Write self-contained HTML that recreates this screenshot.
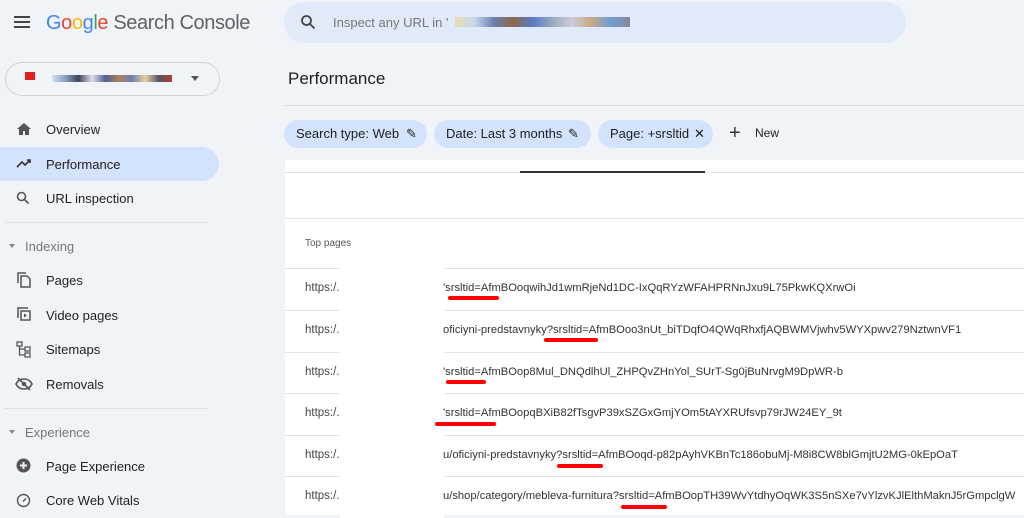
<!DOCTYPE html>
<html><head><meta charset="utf-8"><style>
*{margin:0;padding:0;box-sizing:border-box}
body{width:1024px;height:515px;overflow:hidden;background:#f0f4f9;font-family:"Liberation Sans",Arial,sans-serif;position:relative;color:#1f1f1f}
.a{position:absolute}
.nav{font-size:13px;color:#1f1f1f}
.sec{font-size:13px;color:#747775}
.chip{position:absolute;top:120px;height:28px;border-radius:14px;background:#d3e3fd;font-size:13px;color:#1f1f1f;line-height:28px;padding-left:12px}
.row{position:absolute;left:285px;width:739px;height:41px;border-top:1px solid #e3e3e3}
.row .h{position:absolute;left:20px;top:13px;font-size:11.5px;color:#444}
.row .gap{position:absolute;left:55px;top:-1px;width:104px;height:42px;background:#fff}
.row .u{position:absolute;top:13px;font-size:11.2px;color:#333;white-space:nowrap}
.red{position:absolute;height:4px;border-radius:2px;background:#f00}
</style></head><body>
<div class="a" style="left:14px;top:16px;width:16px;height:2px;background:#444;box-shadow:0 5px 0 #444,0 10px 0 #444"></div>
<div class="a" style="left:46px;top:12px;font-size:20px;letter-spacing:-0.4px"><span style="color:#4285f4">G</span><span style="color:#ea4335">o</span><span style="color:#fbbc05">o</span><span style="color:#4285f4">g</span><span style="color:#34a853">l</span><span style="color:#ea4335">e</span> <span style="color:#5f6368">Search Console</span></div>
<div class="a" style="left:284px;top:2px;width:622px;height:41px;border-radius:21px;background:#e1eaf9"></div>
<svg class="a" style="left:300px;top:14px" width="16" height="16" viewBox="0 0 16 16"><circle cx="6.5" cy="6.5" r="4.5" fill="none" stroke="#444" stroke-width="1.8"/><path d="M10 10l4.5 4.5" stroke="#444" stroke-width="1.8"/></svg>
<div class="a" style="left:333px;top:15px;font-size:13px;color:#777">Inspect any URL in '</div>
<div class="a" style="left:455px;top:17px;width:175px;height:10px;background:linear-gradient(90deg,#e8dcb0,#c9d6ee,#6a7fae,#8a6a4a,#5a7bc8,#9ab,#ccd,#c8a880,#6ea0d8,#889)"></div>
<div class="a" style="left:5px;top:62px;width:215px;height:34px;border-radius:17px;border:1px solid #d0d4d9"></div>
<div class="a" style="left:25px;top:72px;width:10px;height:8px;background:#e02020"></div>
<div class="a" style="left:52px;top:75px;width:120px;height:7px;background:linear-gradient(90deg,#cfe0f5,#8aa0c0,#445,#dde,#506090,#b08060,#7080b0,#e8d0a0,#556,#b04030)"></div>
<div class="a" style="left:191px;top:76px;border:4px solid transparent;border-top:5px solid #555"></div>
<div class="a" style="left:0;top:147px;width:219px;height:34px;border-radius:0 17px 17px 0;background:#d3e3fd"></div>
<svg class="a" style="left:16px;top:122px" width="16" height="14" viewBox="0 0 16 14"><path d="M8 1L1 7h2v6h4V9h2v4h4V7h2z" fill="#555"/></svg>
<div class="a nav" style="left:46px;top:122px">Overview</div>
<svg class="a" style="left:16px;top:157px" width="16" height="12" viewBox="0 0 16 12"><path d="M1 10l5-5 3 3 5-5M11 3h3v3" fill="none" stroke="#333" stroke-width="1.6"/></svg>
<div class="a nav" style="left:46px;top:157px">Performance</div>
<svg class="a" style="left:16px;top:191px" width="14" height="14" viewBox="0 0 14 14"><circle cx="5.5" cy="5.5" r="4" fill="none" stroke="#555" stroke-width="1.6"/><path d="M8.5 8.5l4 4" stroke="#555" stroke-width="1.6"/></svg>
<div class="a nav" style="left:46px;top:191px">URL inspection</div>
<div class="a" style="left:4px;top:222px;width:204px;height:1px;background:#dfe3e8"></div>
<div class="a" style="left:9px;top:244px;border:3px solid transparent;border-top:4px solid #888"></div>
<div class="a sec" style="left:25px;top:239px">Indexing</div>
<svg class="a" style="left:16px;top:271px" width="16" height="17" viewBox="0 0 16 17"><path d="M2 12V2h8" fill="none" stroke="#555" stroke-width="1.5"/><path d="M5 5h6l3 3v8H5z" fill="none" stroke="#555" stroke-width="1.5"/></svg>
<div class="a nav" style="left:46px;top:273px">Pages</div>
<svg class="a" style="left:16px;top:306px" width="16" height="16" viewBox="0 0 16 16"><path d="M2 12V2h10" fill="none" stroke="#555" stroke-width="1.5"/><rect x="5" y="5" width="9" height="9" fill="none" stroke="#555" stroke-width="1.5"/><path d="M8 7.5v4l3-2z" fill="#555"/></svg>
<div class="a nav" style="left:46px;top:308px">Video pages</div>
<svg class="a" style="left:16px;top:341px" width="16" height="17" viewBox="0 0 16 17"><rect x="1" y="1" width="5" height="4" fill="none" stroke="#555" stroke-width="1.3"/><rect x="9" y="6" width="5" height="4" fill="none" stroke="#555" stroke-width="1.3"/><rect x="9" y="12" width="5" height="4" fill="none" stroke="#555" stroke-width="1.3"/><path d="M3.5 5v9h5.5M3.5 8h5.5" fill="none" stroke="#555" stroke-width="1.3"/></svg>
<div class="a nav" style="left:46px;top:342px">Sitemaps</div>
<svg class="a" style="left:15px;top:377px" width="18" height="14" viewBox="0 0 18 14"><path d="M1 7c2-4 5-5 8-5s6 1 8 5c-2 4-5 5-8 5s-6-1-8-5z" fill="none" stroke="#555" stroke-width="1.6"/><circle cx="9" cy="7" r="2.2" fill="#555"/><path d="M3 1l12 12" stroke="#555" stroke-width="1.6"/></svg>
<div class="a nav" style="left:46px;top:377px">Removals</div>
<div class="a" style="left:4px;top:408px;width:204px;height:1px;background:#dfe3e8"></div>
<div class="a" style="left:9px;top:430px;border:3px solid transparent;border-top:4px solid #888"></div>
<div class="a sec" style="left:25px;top:425px">Experience</div>
<svg class="a" style="left:16px;top:458px" width="15" height="15" viewBox="0 0 15 15"><circle cx="7.5" cy="7.5" r="7" fill="#555"/><path d="M7.5 4v7M4 7.5h7" stroke="#f0f4f9" stroke-width="2"/></svg>
<div class="a nav" style="left:46px;top:459px">Page Experience</div>
<svg class="a" style="left:16px;top:493px" width="15" height="15" viewBox="0 0 15 15"><circle cx="7.5" cy="7.5" r="6" fill="none" stroke="#555" stroke-width="1.4"/><path d="M7 8.5l3-3" stroke="#555" stroke-width="1.5"/></svg>
<div class="a nav" style="left:46px;top:493px">Core Web Vitals</div>
<div class="a" style="left:288px;top:69px;font-size:17px;color:#1f1f1f">Performance</div>
<div class="a" style="left:284px;top:105px;width:740px;height:1px;background:#dde1e6"></div>
<div class="chip" style="left:284px;width:143px">Search type: Web <span style="position:absolute;left:122px;top:0;font-size:13px">✎</span></div>
<div class="chip" style="left:434px;width:157px">Date: Last 3 months <span style="position:absolute;left:134px;top:0">✎</span></div>
<div class="chip" style="left:598px;width:115px">Page: +srsltid <span style="position:absolute;left:96px;top:0">✕</span></div>
<div class="a" style="left:729px;top:120px;font-size:20px;line-height:26px;color:#333">+</div>
<div class="a" style="left:755px;top:126px;font-size:12px;color:#1f1f1f">New</div>
<div class="a" style="left:285px;top:160px;width:739px;height:355px;background:#fff"></div>
<div class="a" style="left:285px;top:172px;width:739px;height:1px;background:#e3e3e3"></div>
<div class="a" style="left:520px;top:171px;width:185px;height:2px;background:#333"></div>
<div class="a" style="left:285px;top:218px;width:739px;height:1px;background:#e3e3e3"></div>
<div class="a" style="left:305px;top:238px;font-size:10px;color:#555">Top pages</div>
<div class="row" style="top:268px"><div class="h">https:/.</div><div class="gap"></div><div class="u" style="left:158px">'srsltid=AfmBOoqwihJd1wmRjeNd1DC-IxQqRYzWFAHPRNnJxu9L75PkwKQXrwOi</div><div class="red" style="left:163px;top:27px;width:51px"></div></div>
<div class="row" style="top:310px"><div class="h">https:/.</div><div class="gap"></div><div class="u" style="left:158px">oficiyni-predstavnyky?srsltid=AfmBOoo3nUt_biTDqfO4QWqRhxfjAQBWMVjwhv5WYXpwv279NztwnVF1</div><div class="red" style="left:259px;top:27px;width:54px"></div></div>
<div class="row" style="top:352px"><div class="h">https:/.</div><div class="gap"></div><div class="u" style="left:158px">'srsltid=AfmBOop8Mul_DNQdlhUl_ZHPQvZHnYol_SUrT-Sg0jBuNrvgM9DpWR-b</div><div class="red" style="left:161px;top:27px;width:40px"></div></div>
<div class="row" style="top:393px"><div class="h">https:/.</div><div class="gap"></div><div class="u" style="left:158px">'srsltid=AfmBOopqBXiB82fTsgvP39xSZGxGmjYOm5tAYXRUfsvp79rJW24EY_9t</div><div class="red" style="left:150px;top:28px;width:61px"></div></div>
<div class="row" style="top:435px"><div class="h">https:/.</div><div class="gap"></div><div class="u" style="left:158px">u/oficiyni-predstavnyky?srsltid=AfmBOoqd-p82pAyhVKBnTc186obuMj-M8i8CW8blGmjtU2MG-0kEpOaT</div><div class="red" style="left:272px;top:28px;width:46px"></div></div>
<div class="row" style="top:476px"><div class="h">https:/.</div><div class="gap"></div><div class="u" style="left:158px">u/shop/category/mebleva-furnitura?srsltid=AfmBOopTH39WvYtdhyOqWK3S5nSXe7vYlzvKJlElthMaknJ5rGmpclgW</div><div class="red" style="left:336px;top:28px;width:46px"></div></div>
</body></html>
